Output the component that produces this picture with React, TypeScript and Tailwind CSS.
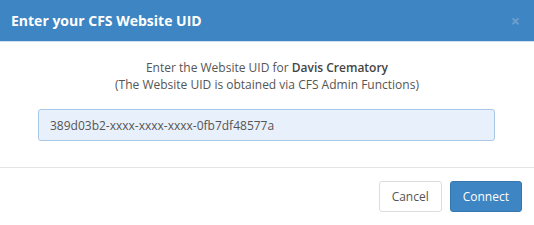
export default function App() {
  return (
    <div className="w-[534px] h-[225px] bg-white overflow-hidden" style={{ fontFamily: '"Open Sans", sans-serif' }}>
      {/* Header */}
      <div className="h-[42px] bg-[#3d85c3] border-b border-[#cfe0ef] flex items-center justify-between pl-[11px] pr-[14px]">
        <h4 className="text-[14px] font-bold text-white">Enter your CFS Website UID</h4>
        <span className="text-[16px] font-bold text-[#6f9fcc] leading-none">×</span>
      </div>

      {/* Body */}
      <div className="px-[38px] pt-[17px] pb-[26px] border-b border-[#e5e5e5]">
        <div className="text-center text-[12px] leading-[17px] text-[#555]">
          <p>
            Enter the Website UID for <span className="font-semibold text-[#444]">Davis Crematory</span>
          </p>
          <p>(The Website UID is obtained via CFS Admin Functions)</p>
        </div>
        <input
          type="text"
          defaultValue="389d03b2-xxxx-xxxx-xxxx-0fb7df48577a"
          className="mt-[16px] w-[457px] h-[32px] px-[11px] text-[12px] text-[#555] bg-[#e8f0fb] border border-[#a9c8e8] rounded-[3px] outline-none"
        />
      </div>

      {/* Footer */}
      <div className="flex justify-end gap-[8px] pt-[13px] pr-[12px]">
        <button className="h-[31px] px-[12px] text-[12px] text-[#555] bg-white border border-[#ddd] rounded-[3px]">
          Cancel
        </button>
        <button className="h-[31px] px-[12px] text-[12px] text-white bg-[#3d85c3] border border-[#3677b0] rounded-[3px]">
          Connect
        </button>
      </div>
    </div>
  )
}
